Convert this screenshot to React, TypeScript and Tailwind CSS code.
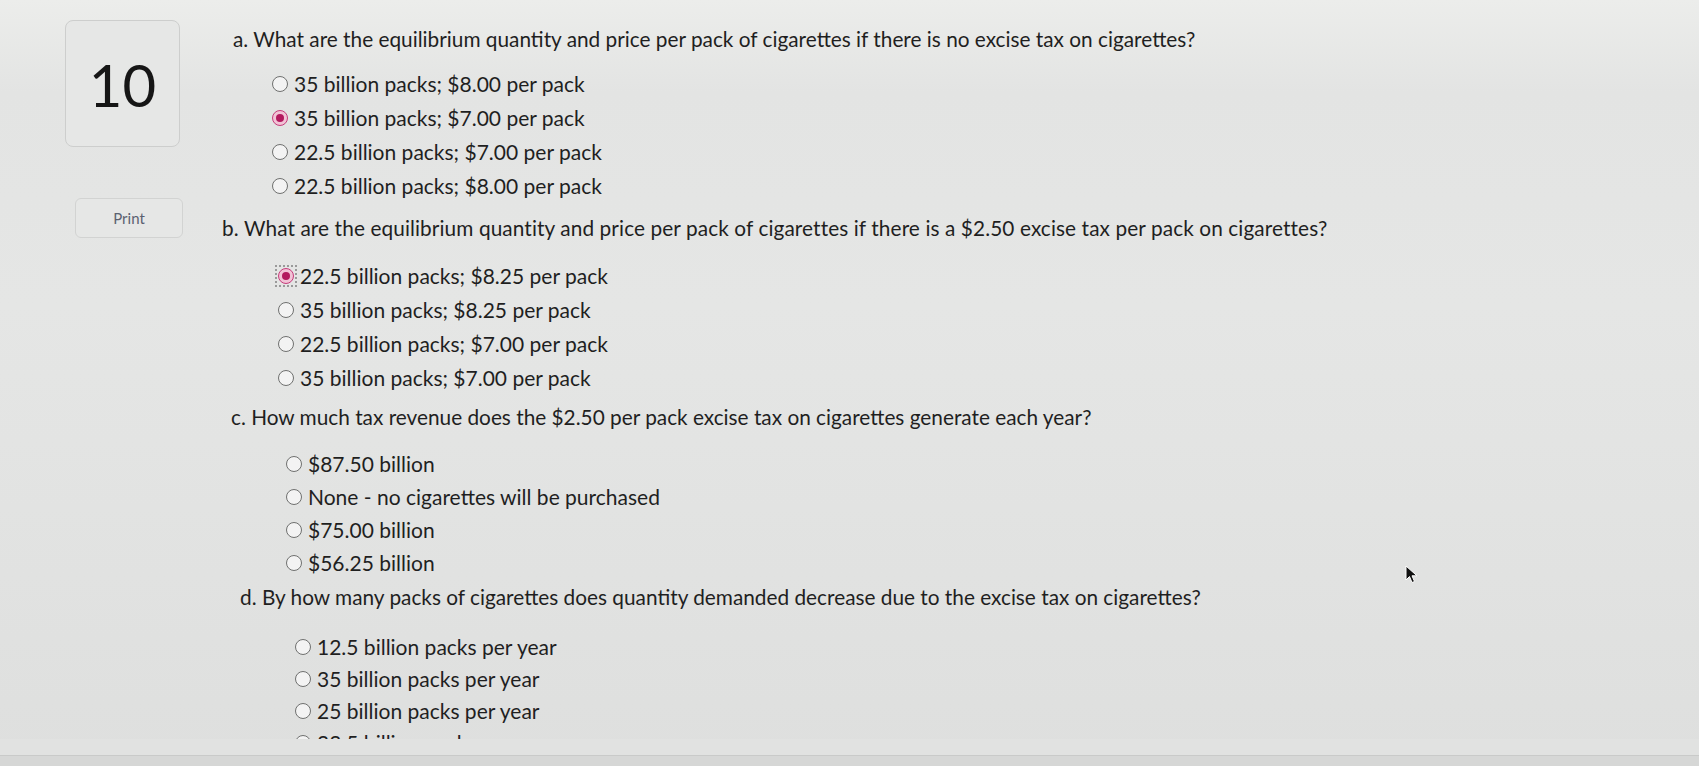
import React from "react";

type Question = {
  label: string;
  text: string;
  options: string[];
  selected: number;
  focused?: boolean;
  qClass: string;
  listClass: string;
  rowClass: string;
};

const questions: Question[] = [
  {
    label: "a.",
    text: "What are the equilibrium quantity and price per pack of cigarettes if there is no excise tax on cigarettes?",
    options: [
      "35 billion packs; $8.00 per pack",
      "35 billion packs; $7.00 per pack",
      "22.5 billion packs; $7.00 per pack",
      "22.5 billion packs; $8.00 per pack"
    ],
    selected: 1,
    qClass: "ml-[233px] mt-[27px]",
    listClass: "ml-[269px] mt-[16px]",
    rowClass: "h-[34px]"
  },
  {
    label: "b.",
    text: "What are the equilibrium quantity and price per pack of cigarettes if there is a $2.50 excise tax per pack on cigarettes?",
    options: [
      "22.5 billion packs; $8.25 per pack",
      "35 billion packs; $8.25 per pack",
      "22.5 billion packs; $7.00 per pack",
      "35 billion packs; $7.00 per pack"
    ],
    selected: 0,
    focused: true,
    qClass: "ml-[222px] mt-[13px] tracking-[0.1px]",
    listClass: "ml-[275px] mt-[19px]",
    rowClass: "h-[34px]"
  },
  {
    label: "c.",
    text: "How much tax revenue does the $2.50 per pack excise tax on cigarettes generate each year?",
    options: [
      "$87.50 billion",
      "None - no cigarettes will be purchased",
      "$75.00 billion",
      "$56.25 billion"
    ],
    selected: -1,
    qClass: "ml-[231px] mt-[10px]",
    listClass: "ml-[283px] mt-[18px]",
    rowClass: "h-[33px]"
  },
  {
    label: "d.",
    text: "By how many packs of cigarettes does quantity demanded decrease due to the excise tax on cigarettes?",
    options: [
      "12.5 billion packs per year",
      "35 billion packs per year",
      "25 billion packs per year",
      "22.5 billion packs per year"
    ],
    selected: -1,
    qClass: "ml-[240px] mt-[6px]",
    listClass: "ml-[292px] mt-[22px]",
    rowClass: "h-[32px]"
  }
];

const Radio = ({ checked, focused }: { checked: boolean; focused?: boolean }) => (
  <span
    className={`flex size-[22px] shrink-0 items-center justify-center ${
      focused ? "outline-2 outline-dotted outline-[#9a9a9a] -outline-offset-2" : ""
    }`}
  >
    {checked ? (
      <span className="flex size-[16px] items-center justify-center rounded-full border-[1.5px] border-[#c63d7c] bg-[#f2c3d6]">
        <span className="size-[8px] rounded-full bg-[#b3195e]"></span>
      </span>
    ) : (
      <span className="size-[16px] rounded-full border-[1.5px] border-[#6f706f] bg-[#f3f3f3]"></span>
    )}
  </span>
);

const App = () => {
  return (
    <div
      className="relative h-[766px] w-[1699px] overflow-hidden bg-[linear-gradient(180deg,#ecedeb_0%,#e3e4e3_12%,#e5e6e5_40%,#e1e2e1_75%,#dedfde_100%)] text-[#1f1f1f]"
      style={{ fontFamily: "Lato, 'Open Sans', sans-serif" }}
    >
      <div className="flex">
        <div className="ml-[65px] mt-[20px] flex w-[118px] shrink-0 flex-col items-start">
          <div className="flex h-[127px] w-[115px] items-center justify-center rounded-[8px] border-[1.5px] border-[#cdcecd] bg-[#e6e7e6] pt-[2px] text-[58px] leading-none text-[#161616]">
            10
          </div>
          <button className="ml-[10px] mt-[51px] flex h-[40px] w-[108px] items-center justify-center rounded-[6px] border-[1.5px] border-[#d2d3d2] bg-[#e6e7e6] text-[15px] text-[#5b6170]">
            Print
          </button>
        </div>

        <div className="-ml-[183px] flex flex-col">
          {questions.map((q) => (
            <div key={q.label} className="flex flex-col">
              <p className={`h-[24px] text-[20.8px] leading-[24px] whitespace-nowrap ${q.qClass}`}>
                {q.label} {q.text}
              </p>
              <ul className={`flex flex-col ${q.listClass}`}>
                {q.options.map((opt, i) => (
                  <li key={opt} className={`flex items-center gap-[3px] text-[21px] whitespace-nowrap ${q.rowClass}`}>
                    <Radio checked={i === q.selected} focused={q.focused && i === q.selected} />
                    <span>{opt}</span>
                  </li>
                ))}
              </ul>
            </div>
          ))}
        </div>
      </div>

      <div className="absolute inset-x-0 top-[739px] h-[27px] bg-[#e1e2e1]">
        <div className="absolute inset-x-0 top-[16px] h-[11px] border-t border-[#c9cac9] bg-[#d6d7d6]"></div>
      </div>

      <svg
        className="absolute left-[1405px] top-[565px]"
        width="14"
        height="20"
        viewBox="0 0 14 20"
      >
        <path d="M1 1 L1 15 L4.5 11.5 L7 17.5 L9.5 16.5 L7 10.8 L12 10.8 Z" fill="#111" stroke="#fff" strokeWidth="1" />
      </svg>
    </div>
  );
};

export default App;
